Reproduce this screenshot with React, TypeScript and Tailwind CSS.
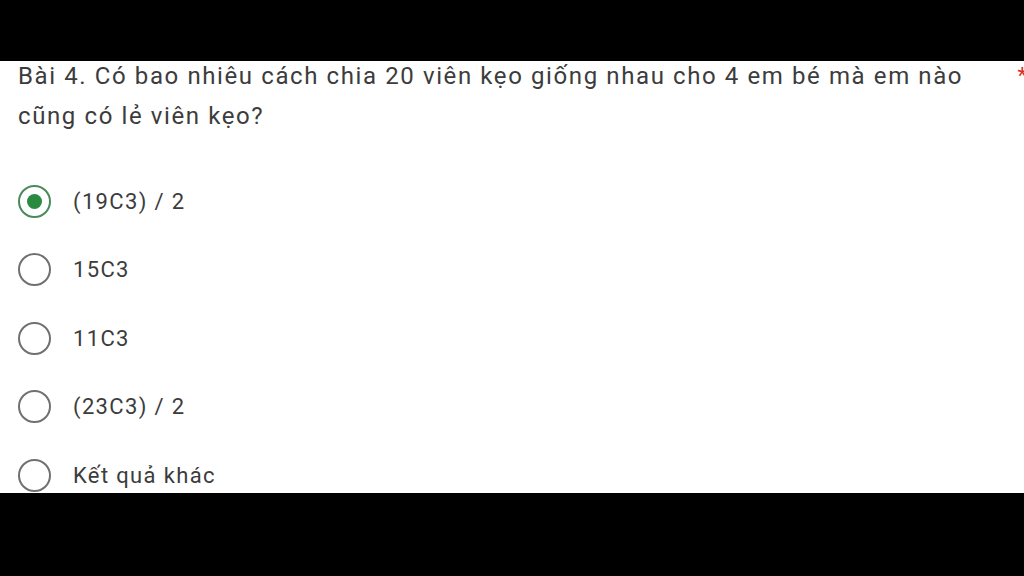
const options = ['(19C3) / 2', '15C3', '11C3', '(23C3) / 2', 'Kết quả khác']

function Radio({ checked }: { checked: boolean }) {
  return (
    <span
      className={`flex items-center justify-center w-[33px] h-[33px] rounded-full border-[2.5px] shrink-0 ${checked ? 'border-[#4a8a5a]' : 'border-[#707070]'}`}
    >
      {checked && <span className="w-[15px] h-[15px] rounded-full bg-[#2a8a40]" />}
    </span>
  )
}

export default function App() {
  return (
    <div className="w-[1024px] h-[576px] flex flex-col bg-black overflow-hidden" style={{ fontFamily: 'Roboto, "Noto Sans", sans-serif' }}>
      <div className="h-[61px] shrink-0 bg-black" />
      <div className="relative h-[432px] shrink-0 bg-white pl-[18px] overflow-hidden">
        <p className="mt-[-5px] pr-[34px] text-[24px] leading-[40px] tracking-[1.6px] text-[#3c3c3c]">
          Bài 4. Có bao nhiêu cách chia 20 viên kẹo giống nhau cho 4 em bé mà em nào cũng có lẻ viên kẹo?
        </p>
        <span className="absolute right-[-3px] top-[-2px] text-[22px] text-[#d93025]">*</span>
        <div className="mt-[31px] flex flex-col">
          {options.map((o, i) => (
            <label key={o} className="flex items-center gap-[22px] h-[68.5px]">
              <Radio checked={i === 0} />
              <span className="text-[22px] tracking-[1.35px] text-[#3c3c3c]">{o}</span>
            </label>
          ))}
        </div>
      </div>
      <div className="flex-1 bg-black" />
    </div>
  )
}
